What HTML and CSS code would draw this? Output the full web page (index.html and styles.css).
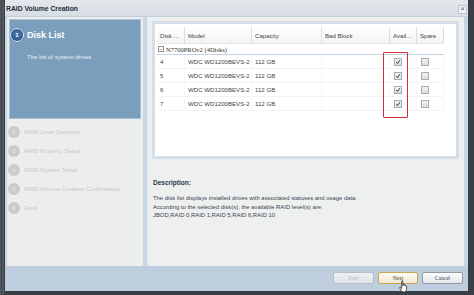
FILE: index.html
```html
<!DOCTYPE html>
<html>
<head>
<meta charset="utf-8">
<link rel="stylesheet" href="styles.css">
</head>
<body>
<div class="screen">
  <div class="dialog">
    <div class="titlebar">
      <span class="title">RAID Volume Creation</span>
      <span class="close">×</span>
    </div>
    <div class="main">
      <div class="leftpanel">
        <div class="current">
          <div class="cur-head">
            <span class="cur-num">1</span>
            <span class="cur-title">Disk List</span>
          </div>
          <div class="cur-desc">The list of system drives</div>
        </div>
        <ul class="steps">
          <li><span class="num">2</span>RAID Level Selection</li>
          <li><span class="num">3</span>RAID Property Setup</li>
          <li><span class="num">4</span>RAID System Setup</li>
          <li><span class="num">5</span>RAID Volume Creation Confirmation</li>
          <li><span class="num">6</span>Final</li>
        </ul>
      </div>
      <div class="rightpanel">
        <div class="tablebox">
          <div class="grid">
            <div class="hd">Disk ...</div>
            <div class="hd">Model</div>
            <div class="hd">Capacity</div>
            <div class="hd">Bad Block</div>
            <div class="hd">Avail...</div>
            <div class="hd">Spare</div>
            <div class="group"><span class="minus">−</span>N7700PROv2 (4Disks)</div>

            <div class="c">4</div><div class="c">WDC WD1200BEVS-2</div><div class="c">112 GB</div><div class="c"></div>
            <div class="c cb"><span class="box on"><svg viewBox="0 0 7 7"><path d="M1.5 3.6 L3 5.2 L5.6 1.4" /></svg></span></div>
            <div class="c cb"><span class="box"></span></div>

            <div class="c">5</div><div class="c">WDC WD1200BEVS-2</div><div class="c">112 GB</div><div class="c"></div>
            <div class="c cb"><span class="box on"><svg viewBox="0 0 7 7"><path d="M1.5 3.6 L3 5.2 L5.6 1.4" /></svg></span></div>
            <div class="c cb"><span class="box"></span></div>

            <div class="c">6</div><div class="c">WDC WD1200BEVS-2</div><div class="c">112 GB</div><div class="c"></div>
            <div class="c cb"><span class="box on"><svg viewBox="0 0 7 7"><path d="M1.5 3.6 L3 5.2 L5.6 1.4" /></svg></span></div>
            <div class="c cb"><span class="box"></span></div>

            <div class="c">7</div><div class="c">WDC WD1200BEVS-2</div><div class="c">112 GB</div><div class="c"></div>
            <div class="c cb"><span class="box on"><svg viewBox="0 0 7 7"><path d="M1.5 3.6 L3 5.2 L5.6 1.4" /></svg></span></div>
            <div class="c cb"><span class="box"></span></div>
          </div>
          <div class="highlight"></div>
        </div>
        <div class="desc">
          <div class="desc-title">Description:</div>
          <p>The disk list displays installed drives with associated statuses and usage data.<br>According to the selected disk(s), the available RAID level(s) are:<br>JBOD,RAID 0,RAID 1,RAID 5,RAID 6,RAID 10</p>
        </div>
      </div>
    </div>
    <div class="footer">
      <button class="btn disabled">Prev</button>
      <button class="btn next">Next</button>
      <button class="btn">Cancel</button>
      <svg class="cursor" viewBox="0 0 10 14" width="9" height="13">
        <path d="M3 1 C3 0.3 4.2 0.3 4.2 1 L4.2 6 L4.5 4.8 C4.6 4.2 5.7 4.2 5.7 4.9 L5.8 6 C5.9 5.3 7 5.3 7 6 L7.1 6.6 C7.3 6 8.3 6.1 8.3 6.8 L8.3 10 C8.3 11.5 7.5 13 6 13 L4.5 13 C3.5 13 2.8 12.2 2.2 11.3 L0.8 8.6 C0.4 7.9 1.3 7.3 1.8 7.9 L3 9.3 Z" fill="#fff" stroke="#000" stroke-width="0.7"/>
      </svg>
    </div>
  </div>
</div>
</body>
</html>
```

FILE: styles.css
```css
html, body {
  margin: 0;
  padding: 0;
}
body {
  width: 474px;
  height: 295px;
  overflow: hidden;
  background: #3c4147;
  font-family: "Liberation Sans", Arial, sans-serif;
  font-size: 6px;
  color: #333;
}
.screen {
  padding-left: 5px;
  height: 295px;
  background: linear-gradient(to right, #5a6067 0, #3a3f45 2px, #6a7078 3px, #3a3f45 4px, #3a3f45 100%);
}
.dialog {
  width: 463px;
  height: 291px;
  background: #c8d6e4;
  display: flex;
  flex-direction: column;
}
.titlebar {
  height: 17px;
  position: relative;
  display: flex;
  align-items: center;
  padding-left: 1px;
  background: linear-gradient(#e4e8ec, #d6dde4);
  border-bottom: 1px solid #c2ceda;
  box-sizing: border-box;
}
.title {
  font-weight: bold;
  font-size: 6.8px;
  color: #1e2b3b;
  margin-top: 1px;
}
.close {
  position: absolute;
  right: 1px;
  top: 5px;
  width: 7px;
  height: 7px;
  line-height: 6px;
  text-align: center;
  font-size: 8px;
  color: #50606e;
  border: 1px solid #b8c4d0;
  background: #eef2f5;
  border-radius: 1px;
}
.main {
  height: 249px;
  display: flex;
  padding: 0 4px 0 2px;
  gap: 4px;
}
.leftpanel {
  width: 136px;
  background: #eceeee;
  padding: 2px 2px 0 2px;
  box-sizing: border-box;
}
.current {
  height: 100px;
  background: #7b9ebc;
  border: 1px solid #a9c1d6;
  box-sizing: border-box;
  padding: 8px 0 0 0;
}
.cur-head {
  display: flex;
  align-items: center;
  height: 14px;
}
.cur-num {
  width: 12px;
  height: 12px;
  border-radius: 50%;
  background: radial-gradient(circle at 50% 40%, #4d7ab0, #224a7e);
  border: 1px solid #dfe9f3;
  color: #fff;
  font-weight: bold;
  font-size: 6px;
  display: flex;
  align-items: center;
  justify-content: center;
  box-shadow: 0 0 1px #2a4a6a;
}
.cur-title {
  margin-left: 3px;
  font-weight: bold;
  font-size: 9px;
  color: #fff;
}
.cur-desc {
  margin: 12px 0 0 17px;
  color: #e8f0f6;
  font-size: 6px;
}
.steps {
  list-style: none;
  margin: 0;
  padding: 3px 0 0 0;
}
.steps li {
  height: 19px;
  display: flex;
  align-items: center;
  color: #c4c6c7;
  font-size: 6px;
  margin-left: -1px;
}
.steps .num {
  width: 12px;
  height: 12px;
  border-radius: 50%;
  background: #c9cbcc;
  color: #e8e8e8;
  font-size: 6px;
  display: flex;
  align-items: center;
  justify-content: center;
  margin-right: 4px;
}
.rightpanel {
  width: 317px;
  background: #eef0f0;
  border-left: 1px solid #dfe6ec;
  box-sizing: border-box;
  padding: 4px 0 0 4px;
}
.tablebox {
  position: relative;
  width: 307px;
  height: 138px;
  box-sizing: border-box;
  background: #fff;
  border: 3px solid #d4dfea;
  padding: 3px 0 0 2px;
}
.grid {
  display: grid;
  grid-template-columns: 28px 67px 70px 68px 27px 27px;
  grid-auto-rows: 14px;
  font-size: 6.1px;
}
.hd {
  height: 17px;
  display: flex;
  align-items: center;
  padding-left: 3px;
  color: #444;
  white-space: nowrap;
  background: linear-gradient(#ffffff, #f2f3f4);
  border-right: 1px solid #dcdfe2;
  border-bottom: 1px solid #e4e7ea;
  box-sizing: border-box;
}
.group {
  grid-column: 1 / 7;
  display: flex;
  align-items: center;
  font-family: "Liberation Serif", "Times New Roman", serif;
  font-size: 6.5px;
  color: #333;
  border-bottom: 1px solid #c4d3e2;
  margin-top: 3px;
  white-space: nowrap;
}
.minus {
  display: inline-flex;
  width: 4px;
  height: 4px;
  border: 1px solid #8a96a2;
  font-size: 5px;
  line-height: 4px;
  justify-content: center;
  margin: 0 2px 0 1px;
  font-family: "Liberation Sans", sans-serif;
}
.c {
  display: flex;
  align-items: center;
  padding-left: 3px;
  color: #444;
  white-space: nowrap;
  overflow: visible;
  border-bottom: 1px solid #f2f3f4;
  border-right: 1px solid #f7f7f7;
}
.c.cb {
  padding-left: 4px;
}
.box {
  width: 6px;
  height: 6px;
  border: 1px solid #a5adb5;
  background: linear-gradient(#f4f4f4, #dcdcdc);
  display: inline-flex;
}
.box svg {
  width: 6px;
  height: 6px;
}
.box path {
  fill: none;
  stroke: #2a2a30;
  stroke-width: 1.1;
}
.highlight {
  position: absolute;
  left: 228px;
  top: 28px;
  width: 25px;
  height: 66px;
  box-sizing: border-box;
  border: 1.5px solid #d82a3c;
  border-radius: 1px;
}
.desc {
  padding-left: 1px;
}
.desc-title {
  margin-top: 19px;
  font-weight: bold;
  font-size: 6.5px;
  color: #26384a;
  height: 9px;
  line-height: 9px;
}
.desc p {
  margin: 7px 0 0 0;
  line-height: 8.5px;
  font-size: 5.9px;
  color: #3a4450;
}
.footer {
  height: 25px;
  background: #bfcede;
  display: flex;
  justify-content: flex-end;
  align-items: flex-start;
  padding: 6px 5px 0 0;
  gap: 4px;
  box-sizing: border-box;
  position: relative;
}
.btn {
  width: 41px;
  height: 12px;
  padding: 0;
  font-family: "Liberation Serif", serif;
  font-size: 5.5px;
  color: #3a4450;
  background: linear-gradient(#fbfbfb, #e6e8ea);
  border: 1px solid #8f9aa6;
  border-radius: 2px;
}
.btn.disabled {
  color: #b4bcc4;
  border-color: #b4bec8;
  background: linear-gradient(#eef0f2, #dfe3e7);
}
.btn.next {
  width: 40px;
  border-color: #c9a455;
  background: linear-gradient(#fffdf4, #f1e9d2);
}
.cursor {
  position: absolute;
  left: 394px;
  top: 14px;
}
```
